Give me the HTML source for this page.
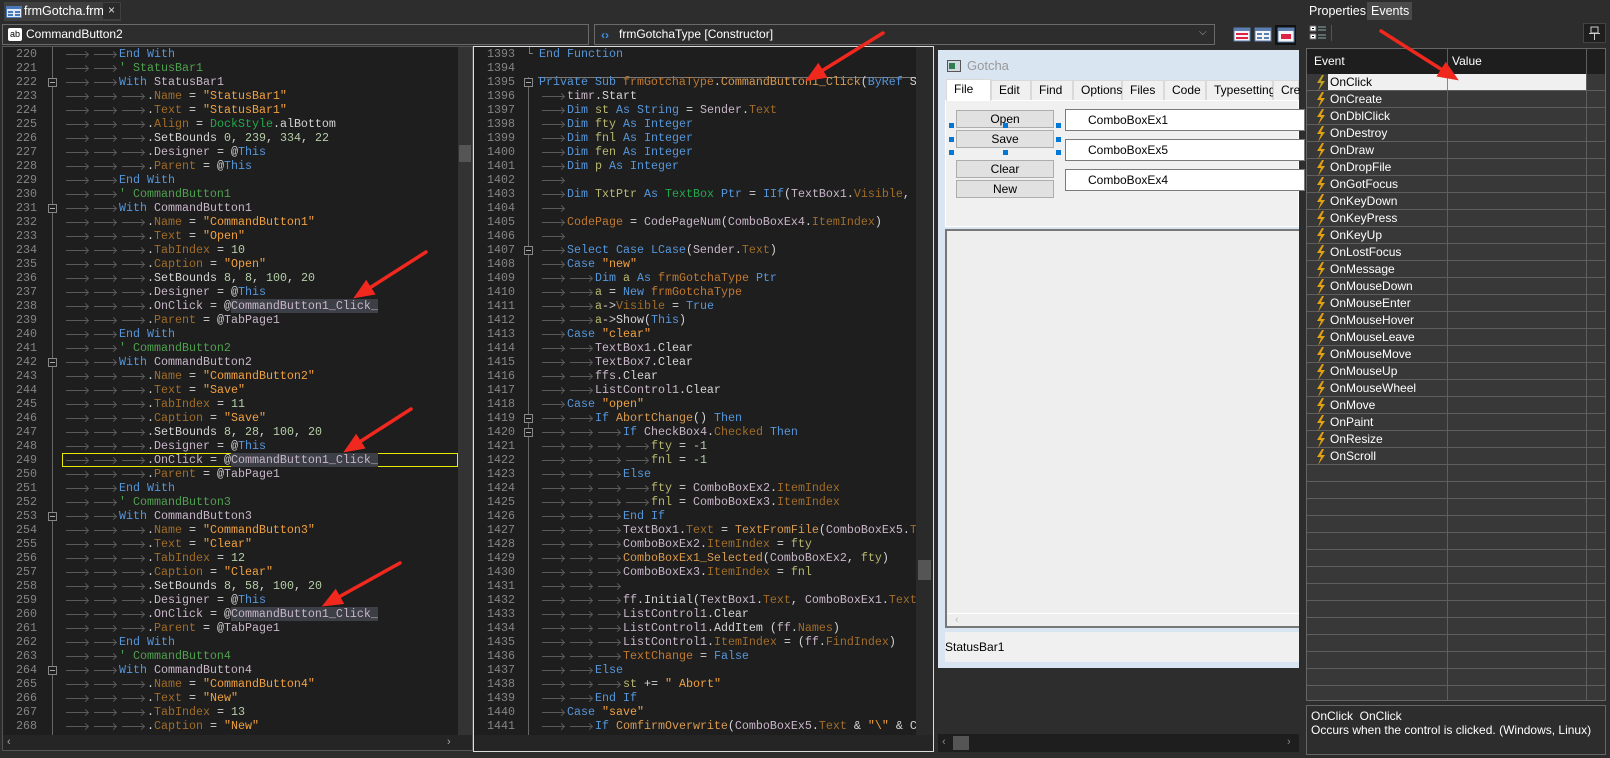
<!DOCTYPE html>
<html><head><meta charset="utf-8"><style>
*{margin:0;padding:0;box-sizing:border-box}
body{width:1610px;height:758px;background:#2d2d2d;position:relative;overflow:hidden;font-family:"Liberation Sans",sans-serif;font-size:12px;color:#ddd}
.abs{position:absolute}
.ed{position:absolute;top:47px;background:#1e1e1e;overflow:hidden;font-family:"Liberation Mono",monospace;font-size:11.67px}
.l{height:14px;line-height:14px;white-space:pre;position:relative}
.ln{position:absolute;left:0;text-align:right;color:#858585}
.cd{position:absolute;color:#d4d4d4}
i{display:inline-block;width:28px;height:14px;position:relative;vertical-align:top}
i::before{content:"";position:absolute;left:3px;right:3px;top:7px;border-top:1px solid #5a5a5a}
i::after{content:"";position:absolute;right:3px;top:5px;width:4px;height:4px;border-top:1px solid #5a5a5a;border-right:1px solid #5a5a5a;transform:rotate(45deg)}
.k{color:#5696da}.c{color:#4fa04f}.s{color:#f0a040}.p{color:#a06c28}.n{color:#b5cea8}.v{color:#c8b6c8}.g{color:#22a84a}.f{color:#d89a50}.o{color:#b8b870}.f2{color:#c07830}
.hl{background:#3c3f45}
.fb{position:absolute;width:9px;height:9px;border:1px solid #888;background:#1e1e1e}
.fb::after{content:"";position:absolute;left:1px;right:1px;top:3px;border-top:1px solid #aaa}
.btn{position:absolute;left:956px;width:98px;height:18px;background:#e1e1e1;border:1px solid #adadad;color:#000;text-align:center;line-height:16px;font-size:12px}
.cb{position:absolute;left:1065px;width:240px;height:22px;background:#fff;border:1px solid #7a7a7a;color:#000;line-height:20px;padding-left:22px;font-size:12px}
.hd{position:absolute;width:5px;height:5px;background:#0078d7}
.tb{position:absolute;top:80px;height:20px;border:1px solid #d9d9d9;border-bottom:none;background:#f0f0f0;color:#000;line-height:19px;padding-left:7px;font-size:12px}
.row{position:absolute;left:1307px;width:298px;height:17px;border-bottom:1px solid #5e5e5e;color:#fff;font-size:12px;line-height:16px}
.row span{position:absolute;left:23px}
.row svg{position:absolute;left:8px;top:1px}
</style></head><body>
<!-- top tab -->
<div class="abs" style="left:4px;top:2px;width:117px;height:19px;background:#3f3f3f"></div>
<svg class="abs" style="left:6px;top:6px" width="16" height="12"><rect x="0.5" y="0.5" width="15" height="11" fill="#dfe8f4" stroke="#4a78b8"/><rect x="1" y="1" width="14" height="2" fill="#4a78b8"/><rect x="2" y="5" width="5" height="2" fill="#4a78b8"/><rect x="9" y="5" width="5" height="2" fill="#4a78b8"/><rect x="2" y="8" width="5" height="2" fill="#4a78b8"/><rect x="9" y="8" width="5" height="2" fill="#4a78b8"/></svg>
<div class="abs" style="left:24px;top:4px;color:#fff;font-size:12.5px">frmGotcha.frm</div>
<div class="abs" style="left:103px;top:3px;width:17px;height:16px;background:#2a2a2a;color:#ddd;text-align:center;line-height:15px;font-size:12px">×</div>
<!-- combos -->
<div class="abs" style="left:2px;top:24px;width:587px;height:21px;border:1px solid #6a6a6a;background:#2d2d2d"></div>
<div class="abs" style="left:8px;top:28px;width:14px;height:13px;background:#fff;border-radius:2px;color:#000;font-size:9px;line-height:13px;text-align:center">ab</div>
<div class="abs" style="left:26px;top:27px;color:#fff;font-size:12px">CommandButton2</div>
<div class="abs" style="left:594px;top:24px;width:621px;height:21px;border:1px solid #6a6a6a;background:#2d2d2d"></div>
<div class="abs" style="left:601px;top:28px;color:#3a8ee6;font-size:12px;font-weight:bold">‹›</div>
<div class="abs" style="left:619px;top:27px;color:#fff;font-size:12px">frmGotchaType [Constructor]</div>
<div class="abs" style="left:1199px;top:27px;color:#aaa;font-size:10px">⌵</div>
<svg class="abs" style="left:1232px;top:25px" width="70" height="20"><rect x="2" y="3" width="16" height="13" fill="#f5f5f5" stroke="#5a7fb0"/><rect x="2" y="3" width="16" height="3" fill="#5a7fb0"/><rect x="4" y="8" width="12" height="2" fill="#d24"/><rect x="4" y="12" width="12" height="2" fill="#d24"/><rect x="23" y="3" width="16" height="13" fill="#f5f5f5" stroke="#5a7fb0"/><rect x="23" y="3" width="16" height="3" fill="#5a7fb0"/><rect x="25" y="8" width="5" height="2" fill="#5a7fb0"/><rect x="32" y="8" width="5" height="2" fill="#5a7fb0"/><rect x="25" y="12" width="5" height="2" fill="#5a7fb0"/><rect x="32" y="12" width="5" height="2" fill="#5a7fb0"/><rect x="43" y="0" width="21" height="20" fill="#111"/><rect x="46" y="3" width="16" height="14" fill="#f5f5f5" stroke="#5a7fb0"/><rect x="46" y="3" width="16" height="3" fill="#5a7fb0"/><rect x="49" y="9" width="10" height="5" fill="#d24"/></svg>

<!-- left editor -->
<div class="abs" style="left:2px;top:46px;width:471px;height:705px;border:1px solid #555;background:#1e1e1e"></div>
<div class="ed" style="left:3px;width:455px;height:688px">
<div class="abs" style="left:49px;top:0;height:688px;border-left:1px solid #666"></div>
<div class="l"><span class="ln" style="width:34px">220</span><span class="cd" style="left:60px"><i></i><i></i><span class="k">End With</span></span></div>
<div class="l"><span class="ln" style="width:34px">221</span><span class="cd" style="left:60px"><i></i><i></i><span class="c">' StatusBar1</span></span></div>
<div class="l"><span class="ln" style="width:34px">222</span><span class="cd" style="left:60px"><i></i><i></i><span class="k">With</span> <span class="v">StatusBar1</span></span></div>
<div class="l"><span class="ln" style="width:34px">223</span><span class="cd" style="left:60px"><i></i><i></i><i></i>.<span class="p">Name</span> = <span class="s">"StatusBar1"</span></span></div>
<div class="l"><span class="ln" style="width:34px">224</span><span class="cd" style="left:60px"><i></i><i></i><i></i>.<span class="p">Text</span> = <span class="s">"StatusBar1"</span></span></div>
<div class="l"><span class="ln" style="width:34px">225</span><span class="cd" style="left:60px"><i></i><i></i><i></i>.<span class="p">Align</span> = <span class="g">DockStyle</span>.alBottom</span></div>
<div class="l"><span class="ln" style="width:34px">226</span><span class="cd" style="left:60px"><i></i><i></i><i></i>.SetBounds <span class="n">0</span>, <span class="n">239</span>, <span class="n">334</span>, <span class="n">22</span></span></div>
<div class="l"><span class="ln" style="width:34px">227</span><span class="cd" style="left:60px"><i></i><i></i><i></i>.<span class="v">Designer</span> = @<span class="k">This</span></span></div>
<div class="l"><span class="ln" style="width:34px">228</span><span class="cd" style="left:60px"><i></i><i></i><i></i>.<span class="p">Parent</span> = @<span class="k">This</span></span></div>
<div class="l"><span class="ln" style="width:34px">229</span><span class="cd" style="left:60px"><i></i><i></i><span class="k">End With</span></span></div>
<div class="l"><span class="ln" style="width:34px">230</span><span class="cd" style="left:60px"><i></i><i></i><span class="c">' CommandButton1</span></span></div>
<div class="l"><span class="ln" style="width:34px">231</span><span class="cd" style="left:60px"><i></i><i></i><span class="k">With</span> <span class="v">CommandButton1</span></span></div>
<div class="l"><span class="ln" style="width:34px">232</span><span class="cd" style="left:60px"><i></i><i></i><i></i>.<span class="p">Name</span> = <span class="s">"CommandButton1"</span></span></div>
<div class="l"><span class="ln" style="width:34px">233</span><span class="cd" style="left:60px"><i></i><i></i><i></i>.<span class="p">Text</span> = <span class="s">"Open"</span></span></div>
<div class="l"><span class="ln" style="width:34px">234</span><span class="cd" style="left:60px"><i></i><i></i><i></i>.<span class="p">TabIndex</span> = <span class="n">10</span></span></div>
<div class="l"><span class="ln" style="width:34px">235</span><span class="cd" style="left:60px"><i></i><i></i><i></i>.<span class="p">Caption</span> = <span class="s">"Open"</span></span></div>
<div class="l"><span class="ln" style="width:34px">236</span><span class="cd" style="left:60px"><i></i><i></i><i></i>.SetBounds <span class="n">8</span>, <span class="n">8</span>, <span class="n">100</span>, <span class="n">20</span></span></div>
<div class="l"><span class="ln" style="width:34px">237</span><span class="cd" style="left:60px"><i></i><i></i><i></i>.<span class="v">Designer</span> = @<span class="k">This</span></span></div>
<div class="l"><span class="ln" style="width:34px">238</span><span class="cd" style="left:60px"><i></i><i></i><i></i>.<span class="v">OnClick</span> = @<span class="hl v">CommandButton1_Click_</span></span></div>
<div class="l"><span class="ln" style="width:34px">239</span><span class="cd" style="left:60px"><i></i><i></i><i></i>.<span class="p">Parent</span> = @<span class="v">TabPage1</span></span></div>
<div class="l"><span class="ln" style="width:34px">240</span><span class="cd" style="left:60px"><i></i><i></i><span class="k">End With</span></span></div>
<div class="l"><span class="ln" style="width:34px">241</span><span class="cd" style="left:60px"><i></i><i></i><span class="c">' CommandButton2</span></span></div>
<div class="l"><span class="ln" style="width:34px">242</span><span class="cd" style="left:60px"><i></i><i></i><span class="k">With</span> <span class="v">CommandButton2</span></span></div>
<div class="l"><span class="ln" style="width:34px">243</span><span class="cd" style="left:60px"><i></i><i></i><i></i>.<span class="p">Name</span> = <span class="s">"CommandButton2"</span></span></div>
<div class="l"><span class="ln" style="width:34px">244</span><span class="cd" style="left:60px"><i></i><i></i><i></i>.<span class="p">Text</span> = <span class="s">"Save"</span></span></div>
<div class="l"><span class="ln" style="width:34px">245</span><span class="cd" style="left:60px"><i></i><i></i><i></i>.<span class="p">TabIndex</span> = <span class="n">11</span></span></div>
<div class="l"><span class="ln" style="width:34px">246</span><span class="cd" style="left:60px"><i></i><i></i><i></i>.<span class="p">Caption</span> = <span class="s">"Save"</span></span></div>
<div class="l"><span class="ln" style="width:34px">247</span><span class="cd" style="left:60px"><i></i><i></i><i></i>.SetBounds <span class="n">8</span>, <span class="n">28</span>, <span class="n">100</span>, <span class="n">20</span></span></div>
<div class="l"><span class="ln" style="width:34px">248</span><span class="cd" style="left:60px"><i></i><i></i><i></i>.<span class="v">Designer</span> = @<span class="k">This</span></span></div>
<div class="l" style="outline:1px solid #e8e800;outline-offset:-1px;margin-left:59px;width:396px"><span class="ln" style="width:34px;left:-59px">249</span><span class="cd" style="left:1px"><i></i><i></i><i></i>.<span class="v">OnClick</span> = @<span class="hl v">CommandButton1_Click_</span></span></div>
<div class="l"><span class="ln" style="width:34px">250</span><span class="cd" style="left:60px"><i></i><i></i><i></i>.<span class="p">Parent</span> = @<span class="v">TabPage1</span></span></div>
<div class="l"><span class="ln" style="width:34px">251</span><span class="cd" style="left:60px"><i></i><i></i><span class="k">End With</span></span></div>
<div class="l"><span class="ln" style="width:34px">252</span><span class="cd" style="left:60px"><i></i><i></i><span class="c">' CommandButton3</span></span></div>
<div class="l"><span class="ln" style="width:34px">253</span><span class="cd" style="left:60px"><i></i><i></i><span class="k">With</span> <span class="v">CommandButton3</span></span></div>
<div class="l"><span class="ln" style="width:34px">254</span><span class="cd" style="left:60px"><i></i><i></i><i></i>.<span class="p">Name</span> = <span class="s">"CommandButton3"</span></span></div>
<div class="l"><span class="ln" style="width:34px">255</span><span class="cd" style="left:60px"><i></i><i></i><i></i>.<span class="p">Text</span> = <span class="s">"Clear"</span></span></div>
<div class="l"><span class="ln" style="width:34px">256</span><span class="cd" style="left:60px"><i></i><i></i><i></i>.<span class="p">TabIndex</span> = <span class="n">12</span></span></div>
<div class="l"><span class="ln" style="width:34px">257</span><span class="cd" style="left:60px"><i></i><i></i><i></i>.<span class="p">Caption</span> = <span class="s">"Clear"</span></span></div>
<div class="l"><span class="ln" style="width:34px">258</span><span class="cd" style="left:60px"><i></i><i></i><i></i>.SetBounds <span class="n">8</span>, <span class="n">58</span>, <span class="n">100</span>, <span class="n">20</span></span></div>
<div class="l"><span class="ln" style="width:34px">259</span><span class="cd" style="left:60px"><i></i><i></i><i></i>.<span class="v">Designer</span> = @<span class="k">This</span></span></div>
<div class="l"><span class="ln" style="width:34px">260</span><span class="cd" style="left:60px"><i></i><i></i><i></i>.<span class="v">OnClick</span> = @<span class="hl v">CommandButton1_Click_</span></span></div>
<div class="l"><span class="ln" style="width:34px">261</span><span class="cd" style="left:60px"><i></i><i></i><i></i>.<span class="p">Parent</span> = @<span class="v">TabPage1</span></span></div>
<div class="l"><span class="ln" style="width:34px">262</span><span class="cd" style="left:60px"><i></i><i></i><span class="k">End With</span></span></div>
<div class="l"><span class="ln" style="width:34px">263</span><span class="cd" style="left:60px"><i></i><i></i><span class="c">' CommandButton4</span></span></div>
<div class="l"><span class="ln" style="width:34px">264</span><span class="cd" style="left:60px"><i></i><i></i><span class="k">With</span> <span class="v">CommandButton4</span></span></div>
<div class="l"><span class="ln" style="width:34px">265</span><span class="cd" style="left:60px"><i></i><i></i><i></i>.<span class="p">Name</span> = <span class="s">"CommandButton4"</span></span></div>
<div class="l"><span class="ln" style="width:34px">266</span><span class="cd" style="left:60px"><i></i><i></i><i></i>.<span class="p">Text</span> = <span class="s">"New"</span></span></div>
<div class="l"><span class="ln" style="width:34px">267</span><span class="cd" style="left:60px"><i></i><i></i><i></i>.<span class="p">TabIndex</span> = <span class="n">13</span></span></div>
<div class="l"><span class="ln" style="width:34px">268</span><span class="cd" style="left:60px"><i></i><i></i><i></i>.<span class="p">Caption</span> = <span class="s">"New"</span></span></div>
<div class="fb" style="left:45px;top:31px"></div><div class="fb" style="left:45px;top:157px"></div><div class="fb" style="left:45px;top:311px"></div><div class="fb" style="left:45px;top:465px"></div><div class="fb" style="left:45px;top:619px"></div>
</div>
<div class="abs" style="left:458px;top:47px;width:14px;height:688px;background:#333"></div>
<div class="abs" style="left:459px;top:145px;width:12px;height:17px;background:#555"></div>
<div class="abs" style="left:3px;top:735px;width:469px;height:15px;background:#252525;color:#aaa;font-size:11px;line-height:15px"><span style="position:absolute;left:4px">‹</span><span style="position:absolute;left:444px">›</span></div>

<!-- middle editor -->
<div class="abs" style="left:473px;top:46px;width:461px;height:706px;border:1px solid #ddd;background:#1e1e1e"></div>
<div class="ed" style="left:474px;width:442px;height:688px">
<div class="abs" style="left:54px;top:30px;height:660px;border-left:1px solid #666"></div>
<div class="abs" style="left:64px;top:30px;width:380px;border-top:1px solid #777"></div>
<div class="l"><span class="ln" style="width:41px">1393</span><span class="cd" style="left:52px;color:#888">└ </span><span class="cd" style="left:65px"><span class="k">End Function</span></span></div>
<div class="l"><span class="ln" style="width:41px">1394</span></div>
<div class="l"><span class="ln" style="width:41px">1395</span><span class="cd" style="left:65px"><span class="k">Private Sub</span> <span class="f2">frmGotchaType</span>.<span class="f">CommandButton1_Click</span>(<span class="k">ByRef</span> S</span></div>
<div class="l"><span class="ln" style="width:41px">1396</span><span class="cd" style="left:65px"><i></i><span class="v">timr</span>.Start</span></div>
<div class="l"><span class="ln" style="width:41px">1397</span><span class="cd" style="left:65px"><i></i><span class="k">Dim</span> <span class="o">st</span> <span class="k">As String</span> = <span class="v">Sender</span>.<span class="p">Text</span></span></div>
<div class="l"><span class="ln" style="width:41px">1398</span><span class="cd" style="left:65px"><i></i><span class="k">Dim</span> <span class="o">fty</span> <span class="k">As Integer</span></span></div>
<div class="l"><span class="ln" style="width:41px">1399</span><span class="cd" style="left:65px"><i></i><span class="k">Dim</span> <span class="o">fnl</span> <span class="k">As Integer</span></span></div>
<div class="l"><span class="ln" style="width:41px">1400</span><span class="cd" style="left:65px"><i></i><span class="k">Dim</span> <span class="o">fen</span> <span class="k">As Integer</span></span></div>
<div class="l"><span class="ln" style="width:41px">1401</span><span class="cd" style="left:65px"><i></i><span class="k">Dim</span> <span class="o">p</span> <span class="k">As Integer</span></span></div>
<div class="l"><span class="ln" style="width:41px">1402</span><span class="cd" style="left:65px"><i></i></span></div>
<div class="l"><span class="ln" style="width:41px">1403</span><span class="cd" style="left:65px"><i></i><span class="k">Dim</span> <span class="o">TxtPtr</span> <span class="k">As</span> <span class="g">TextBox</span> <span class="k">Ptr</span> = <span class="k">IIf</span>(<span class="v">TextBox1</span>.<span class="p">Visible</span>,</span></div>
<div class="l"><span class="ln" style="width:41px">1404</span><span class="cd" style="left:65px"><i></i></span></div>
<div class="l"><span class="ln" style="width:41px">1405</span><span class="cd" style="left:65px"><i></i><span class="f2">CodePage</span> = <span class="v">CodePageNum</span>(<span class="v">ComboBoxEx4</span>.<span class="p">ItemIndex</span>)</span></div>
<div class="l"><span class="ln" style="width:41px">1406</span><span class="cd" style="left:65px"><i></i></span></div>
<div class="l"><span class="ln" style="width:41px">1407</span><span class="cd" style="left:65px"><i></i><span class="k">Select Case</span> <span class="k">LCase</span>(<span class="v">Sender</span>.<span class="p">Text</span>)</span></div>
<div class="l"><span class="ln" style="width:41px">1408</span><span class="cd" style="left:65px"><i></i><span class="k">Case</span> <span class="s">"new"</span></span></div>
<div class="l"><span class="ln" style="width:41px">1409</span><span class="cd" style="left:65px"><i></i><i></i><span class="k">Dim</span> <span class="o">a</span> <span class="k">As</span> <span class="f2">frmGotchaType</span> <span class="k">Ptr</span></span></div>
<div class="l"><span class="ln" style="width:41px">1410</span><span class="cd" style="left:65px"><i></i><i></i><span class="o">a</span> = <span class="k">New</span> <span class="f2">frmGotchaType</span></span></div>
<div class="l"><span class="ln" style="width:41px">1411</span><span class="cd" style="left:65px"><i></i><i></i><span class="o">a</span>-&gt;<span class="p">Visible</span> = <span class="k">True</span></span></div>
<div class="l"><span class="ln" style="width:41px">1412</span><span class="cd" style="left:65px"><i></i><i></i><span class="o">a</span>-&gt;Show(<span class="k">This</span>)</span></div>
<div class="l"><span class="ln" style="width:41px">1413</span><span class="cd" style="left:65px"><i></i><span class="k">Case</span> <span class="s">"clear"</span></span></div>
<div class="l"><span class="ln" style="width:41px">1414</span><span class="cd" style="left:65px"><i></i><i></i><span class="v">TextBox1</span>.Clear</span></div>
<div class="l"><span class="ln" style="width:41px">1415</span><span class="cd" style="left:65px"><i></i><i></i><span class="v">TextBox7</span>.Clear</span></div>
<div class="l"><span class="ln" style="width:41px">1416</span><span class="cd" style="left:65px"><i></i><i></i><span class="v">ffs</span>.Clear</span></div>
<div class="l"><span class="ln" style="width:41px">1417</span><span class="cd" style="left:65px"><i></i><i></i><span class="v">ListControl1</span>.Clear</span></div>
<div class="l"><span class="ln" style="width:41px">1418</span><span class="cd" style="left:65px"><i></i><span class="k">Case</span> <span class="s">"open"</span></span></div>
<div class="l"><span class="ln" style="width:41px">1419</span><span class="cd" style="left:65px"><i></i><i></i><span class="k">If</span> <span class="f">AbortChange</span>() <span class="k">Then</span></span></div>
<div class="l"><span class="ln" style="width:41px">1420</span><span class="cd" style="left:65px"><i></i><i></i><i></i><span class="k">If</span> <span class="v">CheckBox4</span>.<span class="p">Checked</span> <span class="k">Then</span></span></div>
<div class="l"><span class="ln" style="width:41px">1421</span><span class="cd" style="left:65px"><i></i><i></i><i></i><i></i><span class="o">fty</span> = <span class="n">-1</span></span></div>
<div class="l"><span class="ln" style="width:41px">1422</span><span class="cd" style="left:65px"><i></i><i></i><i></i><i></i><span class="o">fnl</span> = <span class="n">-1</span></span></div>
<div class="l"><span class="ln" style="width:41px">1423</span><span class="cd" style="left:65px"><i></i><i></i><i></i><span class="k">Else</span></span></div>
<div class="l"><span class="ln" style="width:41px">1424</span><span class="cd" style="left:65px"><i></i><i></i><i></i><i></i><span class="o">fty</span> = <span class="v">ComboBoxEx2</span>.<span class="p">ItemIndex</span></span></div>
<div class="l"><span class="ln" style="width:41px">1425</span><span class="cd" style="left:65px"><i></i><i></i><i></i><i></i><span class="o">fnl</span> = <span class="v">ComboBoxEx3</span>.<span class="p">ItemIndex</span></span></div>
<div class="l"><span class="ln" style="width:41px">1426</span><span class="cd" style="left:65px"><i></i><i></i><i></i><span class="k">End If</span></span></div>
<div class="l"><span class="ln" style="width:41px">1427</span><span class="cd" style="left:65px"><i></i><i></i><i></i><span class="v">TextBox1</span>.<span class="p">Text</span> = <span class="f">TextFromFile</span>(<span class="v">ComboBoxEx5</span>.<span class="p">T</span></span></div>
<div class="l"><span class="ln" style="width:41px">1428</span><span class="cd" style="left:65px"><i></i><i></i><i></i><span class="v">ComboBoxEx2</span>.<span class="p">ItemIndex</span> = <span class="o">fty</span></span></div>
<div class="l"><span class="ln" style="width:41px">1429</span><span class="cd" style="left:65px"><i></i><i></i><i></i><span class="f">ComboBoxEx1_Selected</span>(<span class="v">ComboBoxEx2</span>, <span class="o">fty</span>)</span></div>
<div class="l"><span class="ln" style="width:41px">1430</span><span class="cd" style="left:65px"><i></i><i></i><i></i><span class="v">ComboBoxEx3</span>.<span class="p">ItemIndex</span> = <span class="o">fnl</span></span></div>
<div class="l"><span class="ln" style="width:41px">1431</span><span class="cd" style="left:65px"><i></i><i></i><i></i></span></div>
<div class="l"><span class="ln" style="width:41px">1432</span><span class="cd" style="left:65px"><i></i><i></i><i></i><span class="v">ff</span>.Initial(<span class="v">TextBox1</span>.<span class="p">Text</span>, <span class="v">ComboBoxEx1</span>.<span class="p">Text</span></span></div>
<div class="l"><span class="ln" style="width:41px">1433</span><span class="cd" style="left:65px"><i></i><i></i><i></i><span class="v">ListControl1</span>.Clear</span></div>
<div class="l"><span class="ln" style="width:41px">1434</span><span class="cd" style="left:65px"><i></i><i></i><i></i><span class="v">ListControl1</span>.AddItem (<span class="v">ff</span>.<span class="p">Names</span>)</span></div>
<div class="l"><span class="ln" style="width:41px">1435</span><span class="cd" style="left:65px"><i></i><i></i><i></i><span class="v">ListControl1</span>.<span class="p">ItemIndex</span> = (<span class="v">ff</span>.<span class="p">FindIndex</span>)</span></div>
<div class="l"><span class="ln" style="width:41px">1436</span><span class="cd" style="left:65px"><i></i><i></i><i></i><span class="f2">TextChange</span> = <span class="k">False</span></span></div>
<div class="l"><span class="ln" style="width:41px">1437</span><span class="cd" style="left:65px"><i></i><i></i><span class="k">Else</span></span></div>
<div class="l"><span class="ln" style="width:41px">1438</span><span class="cd" style="left:65px"><i></i><i></i><i></i><span class="o">st</span> += <span class="s">" Abort"</span></span></div>
<div class="l"><span class="ln" style="width:41px">1439</span><span class="cd" style="left:65px"><i></i><i></i><span class="k">End If</span></span></div>
<div class="l"><span class="ln" style="width:41px">1440</span><span class="cd" style="left:65px"><i></i><span class="k">Case</span> <span class="s">"save"</span></span></div>
<div class="l"><span class="ln" style="width:41px">1441</span><span class="cd" style="left:65px"><i></i><i></i><span class="k">If</span> <span class="f">ComfirmOverwrite</span>(<span class="v">ComboBoxEx5</span>.<span class="p">Text</span> &amp; <span class="s">"\"</span> &amp; C</span></div>
<div class="fb" style="left:50px;top:31px"></div><div class="fb" style="left:50px;top:199px"></div><div class="fb" style="left:50px;top:367px"></div><div class="fb" style="left:50px;top:381px"></div>
</div>
<div class="abs" style="left:916px;top:47px;width:17px;height:688px;background:#2a2a2a"></div>
<div class="abs" style="left:918px;top:560px;width:13px;height:20px;background:#555"></div>
<div class="abs" style="left:474px;top:735px;width:459px;height:16px;background:#252525"></div>

<!-- form designer -->
<div class="abs" style="left:938px;top:50px;width:361px;height:618px;background:#dae5f2"></div>
<svg class="abs" style="left:947px;top:60px" width="14" height="12"><rect x="0.5" y="0.5" width="13" height="11" fill="#cfd8e0" stroke="#555"/><rect x="2" y="3" width="6" height="6" fill="#2f7d50"/></svg>
<div class="abs" style="left:967px;top:58px;color:#999;font-size:13px">Gotcha</div>
<div class="abs" style="left:945px;top:100px;width:354px;height:127px;background:#f0f0f0;border:1px solid #fff"></div>
<div class="tb" style="left:946px;width:45px;background:#fff;top:79px;height:22px;border-color:#d9d9d9">File</div>
<div class="tb" style="left:991px;width:40px">Edit</div>
<div class="tb" style="left:1031px;width:42px">Find</div>
<div class="tb" style="left:1073px;width:49px">Options</div>
<div class="tb" style="left:1122px;width:42px">Files</div>
<div class="tb" style="left:1164px;width:42px">Code</div>
<div class="tb" style="left:1206px;width:67px">Typesetting</div>
<div class="tb" style="left:1273px;width:26px">Cre</div>
<div class="btn" style="top:110px">Open</div>
<div class="btn" style="top:130px">Save</div>
<div class="btn" style="top:160px">Clear</div>
<div class="btn" style="top:180px">New</div>
<div class="hd" style="left:949px;top:123px"></div><div class="hd" style="left:1003px;top:123px"></div><div class="hd" style="left:1056px;top:123px"></div>
<div class="hd" style="left:949px;top:137px"></div><div class="hd" style="left:1056px;top:137px"></div>
<div class="hd" style="left:949px;top:150px"></div><div class="hd" style="left:1003px;top:150px"></div><div class="hd" style="left:1056px;top:150px"></div>
<div class="cb" style="top:109px">ComboBoxEx1</div>
<div class="cb" style="top:139px">ComboBoxEx5</div>
<div class="cb" style="top:169px">ComboBoxEx4</div>
<div class="abs" style="left:945px;top:229px;width:354px;height:399px;background:#eee;border:2px solid #777;border-right:none"></div>
<div class="abs" style="left:947px;top:613px;width:352px;height:15px;border-top:1px solid #fff;color:#bbb;font-size:11px;padding-left:8px">‹</div>
<div class="abs" style="left:945px;top:632px;width:354px;height:30px;background:#f0f0f0;color:#000;font-size:12px;line-height:30px">StatusBar1</div>
<div class="abs" style="left:938px;top:734px;width:361px;height:18px;background:#1e1e1e"></div>
<div class="abs" style="left:953px;top:736px;width:16px;height:14px;background:#555"></div>
<div class="abs" style="left:942px;top:736px;color:#888;font-size:11px">‹</div>
<div class="abs" style="left:1287px;top:736px;color:#888;font-size:11px">›</div>

<!-- properties panel -->
<div class="abs" style="left:1309px;top:4px;color:#fff;font-size:12.5px">Properties</div>
<div class="abs" style="left:1367px;top:2px;width:45px;height:18px;background:#4a4a4a;color:#fff;font-size:12.5px;line-height:18px;padding-left:4px">Events</div>
<svg class="abs" style="left:1309px;top:24px" width="18" height="18"><rect x="1" y="2" width="6" height="5" fill="#fff" stroke="#666"/><rect x="1" y="10" width="6" height="5" fill="#fff" stroke="#666"/><g stroke="#8aa" stroke-width="1"><line x1="9" y1="3" x2="17" y2="3"/><line x1="9" y1="6" x2="17" y2="6"/><line x1="9" y1="11" x2="17" y2="11"/><line x1="9" y1="14" x2="17" y2="14"/></g><rect x="3" y="4" width="2" height="1" fill="#000"/><rect x="3" y="12" width="2" height="1" fill="#000"/></svg>
<div class="abs" style="left:1331px;top:25px;width:1px;height:16px;background:#555"></div>
<div class="abs" style="left:1583px;top:23px;width:23px;height:20px;background:#1e1e1e;border:1px solid #444"></div>
<svg class="abs" style="left:1589px;top:26px" width="11" height="14"><rect x="2" y="1" width="7" height="6" fill="none" stroke="#ccc"/><line x1="0" y1="7.5" x2="11" y2="7.5" stroke="#ccc"/><line x1="5.5" y1="8" x2="5.5" y2="14" stroke="#ccc"/></svg>
<div class="abs" style="left:1306px;top:48px;width:300px;height:653px;background:#383838;border:1px solid #666"></div>
<div class="abs" style="left:1307px;top:49px;width:298px;height:25px;background:#1e1e1e;color:#fff;font-size:12px;line-height:25px"><span style="position:absolute;left:7px">Event</span><span style="position:absolute;left:145px">Value</span></div>
<div class="abs" style="left:1447px;top:49px;width:1px;height:651px;background:#5e5e5e"></div>
<div class="abs" style="left:1586px;top:49px;width:1px;height:651px;background:#5e5e5e"></div>
<div class="abs" style="left:1328px;top:74px;width:258px;height:16px;background:#f0f0f0"></div>
<div class="abs" style="left:1447px;top:74px;width:1px;height:16px;background:#888"></div>
<div id="rows"></div>
<div class="abs" style="left:1306px;top:705px;width:300px;height:50px;border:1px solid #666;color:#fff;font-size:12px;line-height:14px;padding:3px 0 0 4px">OnClick&nbsp; OnClick<br>Occurs when the control is clicked. (Windows, Linux)</div>

<!-- event rows -->
<div class="row" style="top:74px"><svg width="12" height="16"><polygon points="7,0 2,8 6,8 3,16 10,6 6,6 9,0" fill="#c0a020"/></svg><span style="color:#000">OnClick</span></div>
<div class="row" style="top:91px"><svg width="12" height="16"><polygon points="7,0 2,8 6,8 3,16 10,6 6,6 9,0" fill="#e0a010"/></svg><span>OnCreate</span></div>
<div class="row" style="top:108px"><svg width="12" height="16"><polygon points="7,0 2,8 6,8 3,16 10,6 6,6 9,0" fill="#e0a010"/></svg><span>OnDblClick</span></div>
<div class="row" style="top:125px"><svg width="12" height="16"><polygon points="7,0 2,8 6,8 3,16 10,6 6,6 9,0" fill="#e0a010"/></svg><span>OnDestroy</span></div>
<div class="row" style="top:142px"><svg width="12" height="16"><polygon points="7,0 2,8 6,8 3,16 10,6 6,6 9,0" fill="#e0a010"/></svg><span>OnDraw</span></div>
<div class="row" style="top:159px"><svg width="12" height="16"><polygon points="7,0 2,8 6,8 3,16 10,6 6,6 9,0" fill="#e0a010"/></svg><span>OnDropFile</span></div>
<div class="row" style="top:176px"><svg width="12" height="16"><polygon points="7,0 2,8 6,8 3,16 10,6 6,6 9,0" fill="#e0a010"/></svg><span>OnGotFocus</span></div>
<div class="row" style="top:193px"><svg width="12" height="16"><polygon points="7,0 2,8 6,8 3,16 10,6 6,6 9,0" fill="#e0a010"/></svg><span>OnKeyDown</span></div>
<div class="row" style="top:210px"><svg width="12" height="16"><polygon points="7,0 2,8 6,8 3,16 10,6 6,6 9,0" fill="#e0a010"/></svg><span>OnKeyPress</span></div>
<div class="row" style="top:227px"><svg width="12" height="16"><polygon points="7,0 2,8 6,8 3,16 10,6 6,6 9,0" fill="#e0a010"/></svg><span>OnKeyUp</span></div>
<div class="row" style="top:244px"><svg width="12" height="16"><polygon points="7,0 2,8 6,8 3,16 10,6 6,6 9,0" fill="#e0a010"/></svg><span>OnLostFocus</span></div>
<div class="row" style="top:261px"><svg width="12" height="16"><polygon points="7,0 2,8 6,8 3,16 10,6 6,6 9,0" fill="#e0a010"/></svg><span>OnMessage</span></div>
<div class="row" style="top:278px"><svg width="12" height="16"><polygon points="7,0 2,8 6,8 3,16 10,6 6,6 9,0" fill="#e0a010"/></svg><span>OnMouseDown</span></div>
<div class="row" style="top:295px"><svg width="12" height="16"><polygon points="7,0 2,8 6,8 3,16 10,6 6,6 9,0" fill="#e0a010"/></svg><span>OnMouseEnter</span></div>
<div class="row" style="top:312px"><svg width="12" height="16"><polygon points="7,0 2,8 6,8 3,16 10,6 6,6 9,0" fill="#e0a010"/></svg><span>OnMouseHover</span></div>
<div class="row" style="top:329px"><svg width="12" height="16"><polygon points="7,0 2,8 6,8 3,16 10,6 6,6 9,0" fill="#e0a010"/></svg><span>OnMouseLeave</span></div>
<div class="row" style="top:346px"><svg width="12" height="16"><polygon points="7,0 2,8 6,8 3,16 10,6 6,6 9,0" fill="#e0a010"/></svg><span>OnMouseMove</span></div>
<div class="row" style="top:363px"><svg width="12" height="16"><polygon points="7,0 2,8 6,8 3,16 10,6 6,6 9,0" fill="#e0a010"/></svg><span>OnMouseUp</span></div>
<div class="row" style="top:380px"><svg width="12" height="16"><polygon points="7,0 2,8 6,8 3,16 10,6 6,6 9,0" fill="#e0a010"/></svg><span>OnMouseWheel</span></div>
<div class="row" style="top:397px"><svg width="12" height="16"><polygon points="7,0 2,8 6,8 3,16 10,6 6,6 9,0" fill="#e0a010"/></svg><span>OnMove</span></div>
<div class="row" style="top:414px"><svg width="12" height="16"><polygon points="7,0 2,8 6,8 3,16 10,6 6,6 9,0" fill="#e0a010"/></svg><span>OnPaint</span></div>
<div class="row" style="top:431px"><svg width="12" height="16"><polygon points="7,0 2,8 6,8 3,16 10,6 6,6 9,0" fill="#e0a010"/></svg><span>OnResize</span></div>
<div class="row" style="top:448px"><svg width="12" height="16"><polygon points="7,0 2,8 6,8 3,16 10,6 6,6 9,0" fill="#e0a010"/></svg><span>OnScroll</span></div>
<div class="row" style="top:465px"></div><div class="row" style="top:482px"></div><div class="row" style="top:499px"></div><div class="row" style="top:516px"></div><div class="row" style="top:533px"></div><div class="row" style="top:550px"></div><div class="row" style="top:567px"></div><div class="row" style="top:584px"></div><div class="row" style="top:601px"></div><div class="row" style="top:618px"></div><div class="row" style="top:635px"></div><div class="row" style="top:652px"></div><div class="row" style="top:669px"></div>

<!-- red arrows -->
<svg class="abs" style="left:0;top:0" width="1610" height="758">
<defs><marker id="ah" markerWidth="6" markerHeight="5" refX="1" refY="2.5" orient="auto"><polygon points="0,0 6,2.5 0,5" fill="#f0281e"/></marker></defs>
<g stroke="#f0281e" stroke-width="3.5" fill="none" stroke-linecap="round" marker-end="url(#ah)">
<line x1="883" y1="33" x2="820" y2="72"/>
<line x1="1381" y1="31" x2="1444" y2="71"/>
<line x1="426" y1="252" x2="368" y2="289"/>
<line x1="411" y1="409" x2="358" y2="443"/>
<line x1="400" y1="563" x2="337" y2="598"/>
</g></svg>
</body></html>
